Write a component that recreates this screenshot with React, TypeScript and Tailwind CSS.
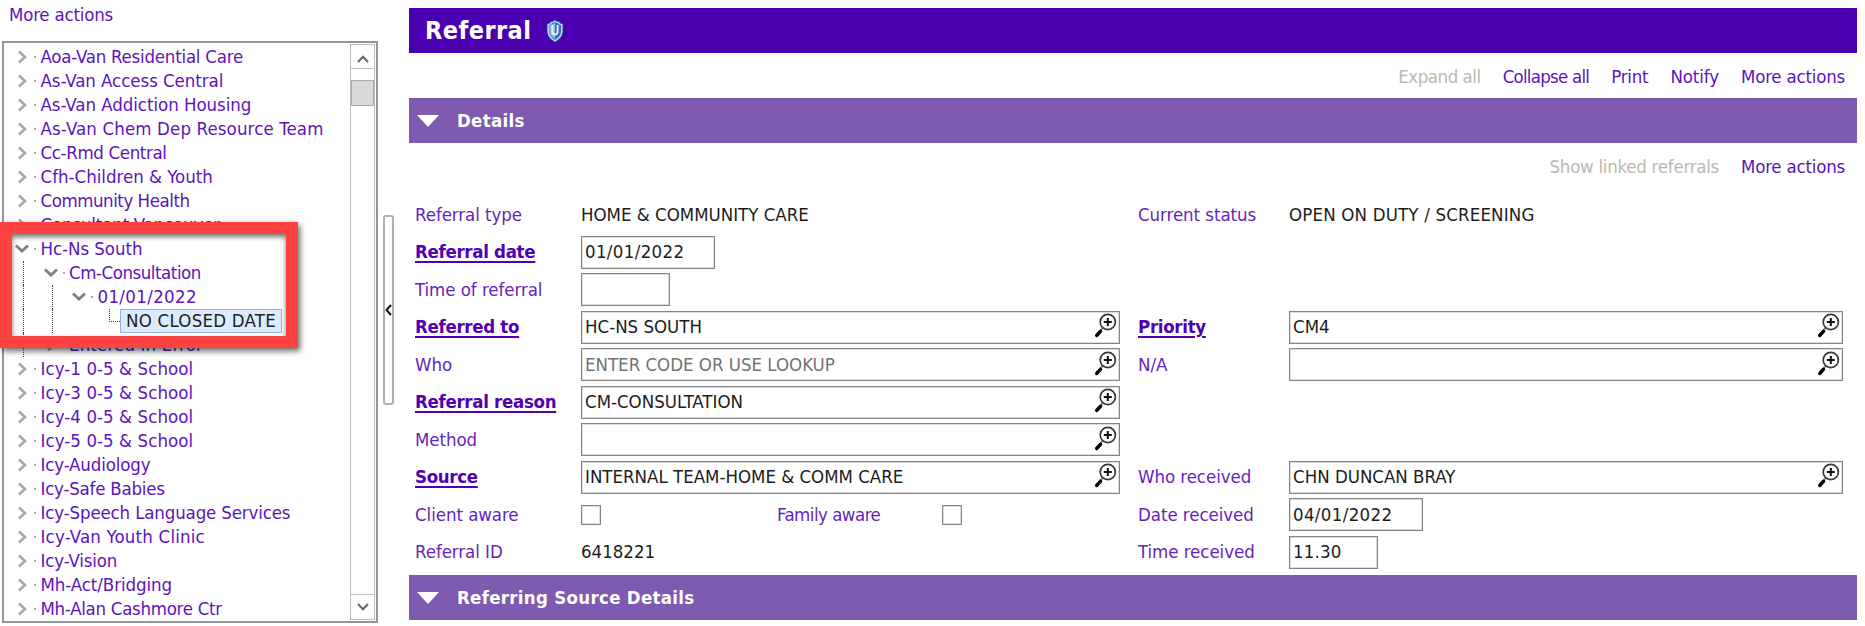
import { clsx } from "clsx";
import type { ReactNode } from "react";

type TreeNode = {
  title: string;
  tracking?: string;
  depth?: number;
  open?: boolean;
  selected?: boolean;
};

const nodes: TreeNode[] = [
  { title: "Aoa-Van Residential Care", tracking: "tracking-[-0.22px]" },
  { title: "As-Van Access Central", tracking: "tracking-[-0.05px]" },
  { title: "As-Van Addiction Housing", tracking: "tracking-[-0.04px]" },
  { title: "As-Van Chem Dep Resource Team", tracking: "tracking-[0.14px]" },
  { title: "Cc-Rmd Central", tracking: "tracking-[-0.35px]" },
  { title: "Cfh-Children & Youth" },
  { title: "Community Health", tracking: "tracking-[-0.45px]" },
  { title: "Consultant-Vancouver", tracking: "tracking-[-0.15px]" },
  { title: "Hc-Ns South", open: true, tracking: "tracking-[-0.05px]" },
  {
    title: "Cm-Consultation",
    depth: 1,
    open: true,
    tracking: "tracking-[-0.45px]",
  },
  {
    title: "01/01/2022",
    depth: 2,
    open: true,
    tracking: "tracking-[0.35px]",
  },
  {
    title: "NO CLOSED DATE",
    depth: 3,
    selected: true,
    tracking: "tracking-[0.25px]",
  },
  { title: "Entered In Error", depth: 1, tracking: "tracking-[0.15px]" },
  { title: "Icy-1 0-5 & School", tracking: "tracking-[0.07px]" },
  { title: "Icy-3 0-5 & School", tracking: "tracking-[0.07px]" },
  { title: "Icy-4 0-5 & School", tracking: "tracking-[0.07px]" },
  { title: "Icy-5 0-5 & School", tracking: "tracking-[0.07px]" },
  { title: "Icy-Audiology", tracking: "tracking-[-0.14px]" },
  { title: "Icy-Safe Babies", tracking: "tracking-[-0.22px]" },
  { title: "Icy-Speech Language Services", tracking: "tracking-[-0.14px]" },
  { title: "Icy-Van Youth Clinic", tracking: "tracking-[0.2px]" },
  { title: "Icy-Vision", tracking: "tracking-[-0.14px]" },
  { title: "Mh-Act/Bridging", tracking: "tracking-[-0.08px]" },
  { title: "Mh-Alan Cashmore Ctr", tracking: "tracking-[-0.28px]" },
];

function Chevron({ open }: { open?: boolean }) {
  return (
    <svg width="14" height="14" viewBox="0 0 14 14" fill="none">
      {open ? (
        <path d="M1 3.5 L7 9 L13 3.5" stroke="#808080" strokeWidth="2.8" />
      ) : (
        <path d="M4 1.5 L10 7 L4 12.5" stroke="#a6a6a6" strokeWidth="2.4" />
      )}
    </svg>
  );
}

function TreeRow({ title, tracking, depth = 0, open, selected }: TreeNode) {
  return (
    <div className="flex h-6 shrink-0 items-center pl-1 whitespace-nowrap">
      {Array.from({ length: depth }, (_, idx) => (
        <div key={`guide-${idx}`} className="h-6 w-[28.5px] shrink-0 pl-[15px]">
          {/* an only child has no line running past it */}
          {idx < 2 && (
            <div className="h-full border-l border-dotted border-[#444]" />
          )}
        </div>
      ))}
      {selected ? (
        <>
          <div className="h-6 w-[26.5px] shrink-0 pl-[15px]">
            <div className="h-[13px] border-b border-l border-dotted border-[#444]" />
          </div>
          <div className="flex h-6 w-[161.5px] items-center border border-[#8fb5e8] bg-[#dcebfd] pl-[5px] text-[#222]">
            <span className={tracking}>{title}</span>
          </div>
        </>
      ) : (
        <>
          <div className="flex w-[28.5px] shrink-0 items-center pl-[7px]">
            <Chevron open={open} />
            <span className="ml-[5px] h-0.5 w-0.5 bg-[#aaa]" />
          </div>
          <span className={clsx("pl-[4px]", tracking)}>{title}</span>
        </>
      )}
    </div>
  );
}

function Arrow({ down }: { down?: boolean }) {
  return (
    <svg width="12" height="8" viewBox="0 0 12 8" fill="none">
      <path
        d={down ? "M1 1 L6 6.2 L11 1" : "M1 7 L6 1.8 L11 7"}
        stroke="#666"
        strokeWidth="2"
      />
    </svg>
  );
}

function Tree() {
  return (
    <div className="flex h-[582px] w-[376px] border-2 border-[#92979e]">
      <div className="min-w-0 flex-1 pt-0.5">
        {nodes.map((node) => (
          <TreeRow key={node.title} {...node} />
        ))}
      </div>
      <div className="mt-px mr-px mb-px flex w-[25px] flex-col border border-[#bdbdbd]">
        <div className="flex h-6 items-center justify-center border-b border-[#bdbdbd] pt-1">
          <Arrow />
        </div>
        <div className="mt-[11px] h-[26px] border border-[#ababab] bg-[#dadada]" />
        <div className="mt-auto flex h-[25px] items-center justify-center border-t border-[#bdbdbd]">
          <Arrow down />
        </div>
      </div>
    </div>
  );
}

function Shield() {
  return (
    <svg width="18" height="24" viewBox="0 0 18 24" fill="none">
      <path
        d="M9 .6 C7.5 1.8 6 2.2 4.6 2.3 L3.2 4 L.8 4.6 V12 C.8 17.5 4.5 21 9 23.3 C13.5 21 17.2 17.5 17.2 12 V4.6 L14.8 4 L13.4 2.3 C12 2.2 10.5 1.8 9 .6 Z"
        fill="#2b549c"
      />
      <path
        d="M9 2.2 C7.8 3.1 6.6 3.5 5.4 3.6 L4 5.2 L2.2 5.7 V12 C2.2 16.8 5.2 19.8 9 21.8 C12.8 19.8 15.8 16.8 15.8 12 V5.7 L14 5.2 L12.6 3.6 C11.4 3.5 10.2 3.1 9 2.2 Z"
        fill="#3a6fc2"
        stroke="#c3e0ea"
        strokeWidth="1.4"
      />
      <path d="M3.4 6.8 L9 4 V20 C5.8 18 3.4 15.8 3.4 12 Z" fill="#8dbbf0" />
      <path
        d="M6.4 6 V12.4 C6.4 14.4 7.4 15.4 9 15.4 C10.6 15.4 11.6 14.4 11.6 12.4 V6"
        stroke="#e4f0ff"
        strokeWidth="1.8"
      />
    </svg>
  );
}

function Lookup() {
  return (
    <svg width="23" height="25" viewBox="0 0 23 25" fill="none">
      <path d="M9 14.5 L6.5 17.5" stroke="#888" strokeWidth="2" />
      <path
        d="M6.4 18.4 L2.8 22.4"
        stroke="#000"
        strokeWidth="3.6"
        strokeLinecap="round"
      />
      <circle cx="13.8" cy="9" r="7.6" stroke="#3a3a3a" strokeWidth="1.7" />
      <path d="M13.8 5 V13 M9.8 9 H17.8" stroke="#111" strokeWidth="2" />
    </svg>
  );
}

function SectionBar({ children }: { children: ReactNode }) {
  return (
    <div className="flex h-[45px] shrink-0 items-center bg-[#7e5ab0] pl-2 font-bold text-white">
      <svg width="22" height="12" viewBox="0 0 22 12" className="mr-[18px]">
        <path d="M0 0 H22 L11 12 Z" fill="#fff" />
      </svg>
      <span className="tracking-[0.3px]">{children}</span>
    </div>
  );
}

function Label({ children, bold }: { children: ReactNode; bold?: boolean }) {
  return (
    <span
      className={clsx(
        bold
          ? "font-bold tracking-[-0.3px] text-[#5100b5] underline decoration-[1.5px] underline-offset-[3px]"
          : "tracking-[-0.05px] text-[#6524bd]",
      )}
    >
      {children}
    </span>
  );
}

const sizes = {
  full: "w-full",
  date: "w-[134px] tracking-[0.35px]",
  time: "w-[89px] tracking-[0.2px]",
};

function Field({
  size = "full",
  value,
  placeholder,
}: {
  size?: keyof typeof sizes;
  value?: string;
  placeholder?: string;
}) {
  return (
    <div
      className={clsx(
        "flex h-[33px] items-center border border-[#848484] bg-white pl-[3px] shadow-[inset_0_0_0_1px_#dcdcdc] whitespace-nowrap",
        sizes[size],
      )}
    >
      <span className={placeholder ? "text-[#737373]" : "text-[#1c1c1c]"}>
        {value ?? placeholder}
      </span>
      {size === "full" && (
        <span className="mr-[2px] mb-[3px] ml-auto">
          <Lookup />
        </span>
      )}
    </div>
  );
}

function CheckBox() {
  return (
    <div className="h-5 w-5 border border-[#848484] bg-white shadow-[inset_0_0_0_1px_#dcdcdc]" />
  );
}

type RowProps = {
  label: string;
  bold?: boolean;
  children: ReactNode;
  rightLabel?: string;
  rightBold?: boolean;
  right?: ReactNode;
};

function FormRow({
  label,
  bold,
  children,
  rightLabel,
  rightBold,
  right,
}: RowProps) {
  return (
    <div className="grid h-[37.5px] shrink-0 grid-cols-[166px_539px_18px_151px_554px] items-center pl-[6px]">
      <Label bold={bold}>{label}</Label>
      <div className="flex items-center">{children}</div>
      <span />
      <span>{rightLabel && <Label bold={rightBold}>{rightLabel}</Label>}</span>
      <div>{right}</div>
    </div>
  );
}

function Referral() {
  return (
    <div className="flex w-[1448px] flex-col">
      <div className="mt-2 flex h-[45px] shrink-0 items-center bg-[#4a00b0] pl-4 text-[25px] font-bold text-white">
        <span className="w-[121px] tracking-[0.45px]">Referral</span>
        <Shield />
      </div>
      <div className="flex h-[45px] shrink-0 items-center justify-end gap-[22px] pt-[3px] pr-3 text-[#5c14bb]">
        <span className="tracking-[-0.45px] text-[#bcb8ae]">Expand all</span>
        <span className="tracking-[-0.75px]">Collapse all</span>
        <span className="tracking-[-0.2px]">Print</span>
        <span className="tracking-[-0.1px]">Notify</span>
        <span className="tracking-[-0.2px]">More actions</span>
      </div>
      <SectionBar>Details</SectionBar>
      <div className="flex h-[53px] shrink-0 items-center justify-end gap-[22px] pr-3 pb-1.5 text-[#5c14bb]">
        <span className="tracking-[-0.25px] text-[#bcb8ae]">
          Show linked referrals
        </span>
        <span className="tracking-[-0.2px]">More actions</span>
      </div>
      <FormRow
        label="Referral type"
        rightLabel="Current status"
        right={
          <span className="tracking-[0.18px]">OPEN ON DUTY / SCREENING</span>
        }
      >
        HOME & COMMUNITY CARE
      </FormRow>
      <FormRow label="Referral date" bold>
        <Field size="date" value="01/01/2022" />
      </FormRow>
      <FormRow label="Time of referral">
        <Field size="time" />
      </FormRow>
      <FormRow
        label="Referred to"
        bold
        rightLabel="Priority"
        rightBold
        right={<Field value="CM4" />}
      >
        <Field value="HC-NS SOUTH" />
      </FormRow>
      <FormRow label="Who" rightLabel="N/A" right={<Field />}>
        <Field placeholder="ENTER CODE OR USE LOOKUP" />
      </FormRow>
      <FormRow label="Referral reason" bold>
        <Field value="CM-CONSULTATION" />
      </FormRow>
      <FormRow label="Method">
        <Field />
      </FormRow>
      <FormRow
        label="Source"
        bold
        rightLabel="Who received"
        right={<Field value="CHN DUNCAN BRAY" />}
      >
        <Field value="INTERNAL TEAM-HOME & COMM CARE" />
      </FormRow>
      <FormRow
        label="Client aware"
        rightLabel="Date received"
        right={<Field size="date" value="04/01/2022" />}
      >
        <CheckBox />
        <span className="ml-[176px] w-[165px] tracking-[-0.5px] text-[#6524bd]">
          Family aware
        </span>
        <CheckBox />
      </FormRow>
      <FormRow
        label="Referral ID"
        rightLabel="Time received"
        right={<Field size="time" value="11.30" />}
      >
        6418221
      </FormRow>
      <div className="h-1 shrink-0" />
      <SectionBar>Referring Source Details</SectionBar>
    </div>
  );
}

export default function App() {
  return (
    <div className="relative flex h-[626px] w-[1865px] overflow-hidden bg-white font-['DejaVu_Sans_Condensed','DejaVu_Sans',sans-serif] text-[18.5px] leading-6 text-[#1c1c1c]">
      <div className="flex w-[381px] shrink-0 flex-col pl-0.5 text-[#5c14bb]">
        <div className="h-[41px] pt-[3px] pl-[7px] tracking-[-0.2px]">
          More actions
        </div>
        <Tree />
      </div>
      <div className="mt-[215px] mr-[15px] ml-[2px] flex h-[190px] w-[11px] shrink-0 items-center justify-center rounded-[3px] border-2 border-[#b0b0b0]">
        <svg
          width="7"
          height="12"
          viewBox="0 0 7 12"
          fill="none"
          className="shrink-0"
        >
          <path d="M6 1 L1.5 6 L6 11" stroke="#111" strokeWidth="2" />
        </svg>
      </div>
      <Referral />
      {/* callout round the open branch */}
      <div className="absolute top-[222px] left-0 h-[126px] w-[298px] border-[12px] border-[#fd4242] shadow-[2px_3px_6px_rgba(0,0,0,0.6),inset_0_3px_5px_rgba(0,0,0,0.55)]" />
    </div>
  );
}
